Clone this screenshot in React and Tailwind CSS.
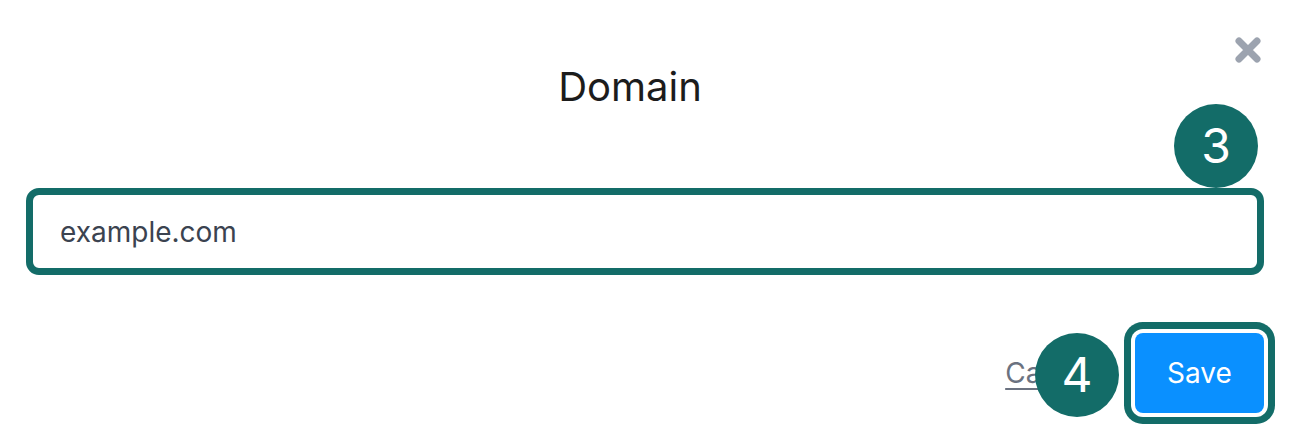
import { useState } from 'react';

const Badge = ({ n, className }) => (
  <div
    className={`absolute w-[84px] h-[84px] rounded-full bg-[#136c68] text-white flex items-center justify-center text-[48px] leading-none ${className}`}
  >
    {n}
  </div>
);

const App = () => {
  const [domain, setDomain] = useState('example.com');

  return (
    <div className="relative w-full h-[442px] bg-white px-[26px] font-['Inter','Noto_Sans',sans-serif] overflow-hidden">
      {/* Close */}
      <button className="absolute top-[36px] right-[28px] w-[28px] h-[28px] flex items-center justify-center">
        <svg width="28" height="28" viewBox="0 0 28 28">
          <path d="M5 5 L23 23 M23 5 L5 23" stroke="#9ca3af" strokeWidth="7" strokeLinecap="round" />
        </svg>
      </button>

      <h2 className="pt-[63px] pr-[30px] text-center text-[40px] leading-[48px] text-[#1c1c1c]">Domain</h2>

      <div className="mt-[77px]">
        <input
          type="text"
          value={domain}
          onChange={(e) => setDomain(e.target.value)}
          className="w-full h-[87px] border-[7px] border-[#136c68] rounded-[13px] pl-[27px] text-[28px] text-[#3b4350] focus:outline-none"
        />
      </div>

      <div className="mt-[58px] flex justify-end items-center gap-[38px]">
        <a href="#" className="text-[28px] text-[#6b7280] underline underline-offset-[5px]">
          Cancel
        </a>
        <button className="w-[129px] h-[80px] rounded-[8px] bg-[#0a90ff] text-white text-[28px] ring-[7px] ring-[#136c68] ring-offset-[4px] ring-offset-white">
          Save
        </button>
      </div>

      {/* Step markers */}
      <Badge n="3" className="left-[1174px] top-[104px]" />
      <Badge n="4" className="left-[1035px] top-[333px]" />
    </div>
  );
};

export default App;
